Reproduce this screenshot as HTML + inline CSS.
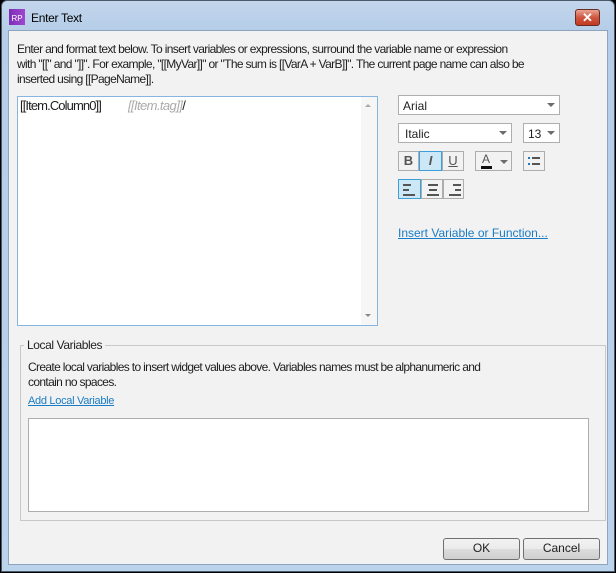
<!DOCTYPE html><html><head><style>
*{box-sizing:border-box;margin:0;padding:0}
body{width:616px;height:573px;position:relative;font-family:"Liberation Sans",Arial,sans-serif;font-size:12px;color:#1e1e1e;background:#000;overflow:hidden}
.a{position:absolute}
.frame{left:1px;top:0;width:614px;height:572px;background:linear-gradient(#c3d6ec,#b5cde8 30px,#bcd3ec);border:1px solid #4a5a6c;border-radius:6px 6px 0 0}
.client{left:8px;top:30px;width:600px;height:535px;background:#f2f2f2;border:1px solid #8ea3bd}
.dd{background:#fff;border:1px solid #aeaeae;padding:3px 4px;font-size:12px}
.car{position:absolute;right:4px;top:7px;width:0;height:0;border-left:4px solid transparent;border-right:4px solid transparent;border-top:4px solid #6c6c6c}
.tb{background:#f2f2f2;border:1px solid #adadad;text-align:center;font-size:13px;color:#555}
.sel{background:#cce8f7;border:1px solid #3c9fd7}
.link{color:#1a7cc4;text-decoration:underline}
.btn{border:1px solid #707070;border-radius:3px;background:linear-gradient(#f2f2f2,#ebebeb 50%,#dcdcdc 51%,#cfcfcf);text-align:center;font-size:12px;line-height:19px}
.line{position:absolute;height:2px;background:#555}
.p{letter-spacing:-0.65px;line-height:15px}
</style></head><body>
<div class="a frame"></div>
<div class="a" style="left:9px;top:9px;width:16px;height:16px;background:linear-gradient(90deg,#7b2fb5,#a046d0);color:#fff;font-size:8px;line-height:20px;text-align:center">RP</div>
<div class="a" style="left:31px;top:11px;font-size:12px;color:#000;letter-spacing:-0.3px">Enter Text</div>
<div class="a" style="left:575px;top:9px;width:25px;height:17px;border:1px solid #6b2a22;border-radius:3px;background:linear-gradient(#e8a493,#d0563e 50%,#c03a22);color:#fff;font-weight:bold;font-size:13px;text-align:center;line-height:15px">✕</div>
<div class="a client"></div>
<div class="a p" style="left:17px;top:42px;width:590px">Enter and format text below. To insert variables or expressions, surround the variable name or expression<br>with "[[" and "]]". For example, "[[MyVar]]" or "The sum is [[VarA + VarB]]". The current page name can also be<br>inserted using [[PageName]].</div>
<div class="a" style="left:17px;top:96px;width:361px;height:230px;background:#fff;border:1px solid #86b6e0"></div>
<div class="a" style="left:361px;top:97px;width:16px;height:228px;background:#f6f6f6"></div>
<div class="a" style="left:365px;top:104px;border-left:3px solid transparent;border-right:3px solid transparent;border-bottom:3px solid #aaa"></div>
<div class="a" style="left:365px;top:314px;border-left:3px solid transparent;border-right:3px solid transparent;border-top:3px solid #888"></div>
<div class="a" style="left:20px;top:98px;font-size:13px;letter-spacing:-0.9px">[[Item.Column0]]</div>
<div class="a" style="left:128px;top:98px;font-size:13px;letter-spacing:-0.6px"><i style="color:#aaa">[[Item.tag]]</i>/</div>
<div class="a dd" style="left:398px;top:95px;width:162px;height:20px">Arial<div class="car"></div></div>
<div class="a dd" style="left:398px;top:123px;width:114px;height:20px;padding-left:6px">Italic<div class="car"></div></div>
<div class="a dd" style="left:523px;top:123px;width:37px;height:20px">13<div class="car"></div></div>
<div class="a tb" style="left:398px;top:151px;width:21px;height:20px;font-weight:bold;line-height:18px">B</div>
<div class="a tb sel" style="left:419px;top:151px;width:23px;height:20px;font-style:italic;line-height:18px;font-weight:bold">I</div>
<div class="a tb" style="left:442px;top:151px;width:22px;height:20px;text-decoration:underline;line-height:18px">U</div>
<div class="a tb" style="left:475px;top:151px;width:37px;height:20px"><span style="position:absolute;left:6px;top:0;font-size:12px;color:#555;line-height:14px">A</span><span style="position:absolute;left:5px;top:14px;width:11px;height:3px;background:#111"></span><div class="car" style="top:8px;right:3px"></div></div>
<div class="a tb" style="left:523px;top:151px;width:22px;height:20px"><span class="line" style="left:8px;top:5px;width:8px"></span><span class="line" style="left:8px;top:11px;width:8px"></span><span class="line" style="left:4px;top:5px;width:2px;background:#1a7cc4"></span><span class="line" style="left:4px;top:11px;width:2px;background:#1a7cc4"></span></div>
<div class="a tb sel" style="left:398px;top:179px;width:23px;height:20px"><span class="line" style="left:4px;top:4px;width:8px"></span><span class="line" style="left:4px;top:9px;width:6px"></span><span class="line" style="left:4px;top:14px;width:12px"></span></div>
<div class="a tb" style="left:421px;top:179px;width:22px;height:20px"><span class="line" style="left:6px;top:4px;width:10px"></span><span class="line" style="left:7px;top:9px;width:8px"></span><span class="line" style="left:5px;top:14px;width:12px"></span></div>
<div class="a tb" style="left:443px;top:179px;width:21px;height:20px"><span class="line" style="left:9px;top:4px;width:8px"></span><span class="line" style="left:11px;top:9px;width:6px"></span><span class="line" style="left:5px;top:14px;width:12px"></span></div>
<div class="a link" style="left:398px;top:226px">Insert Variable or Function...</div>
<div class="a" style="left:20px;top:345px;width:586px;height:176px;border:1px solid #c8c8c8"></div>
<div class="a" style="left:24px;top:338px;background:#f2f2f2;padding:0 3px;letter-spacing:-0.4px">Local Variables</div>
<div class="a p" style="left:28px;top:360px;width:570px">Create local variables to insert widget values above. Variables names must be alphanumeric and<br>contain no spaces.</div>
<div class="a link" style="left:28px;top:395px;font-size:11px;letter-spacing:-0.3px">Add Local Variable</div>
<div class="a" style="left:28px;top:418px;width:561px;height:94px;background:#fff;border:1px solid #adadad"></div>
<div class="a btn" style="left:443px;top:538px;width:77px;height:22px">OK</div>
<div class="a btn" style="left:523px;top:538px;width:77px;height:22px">Cancel</div>
</body></html>
